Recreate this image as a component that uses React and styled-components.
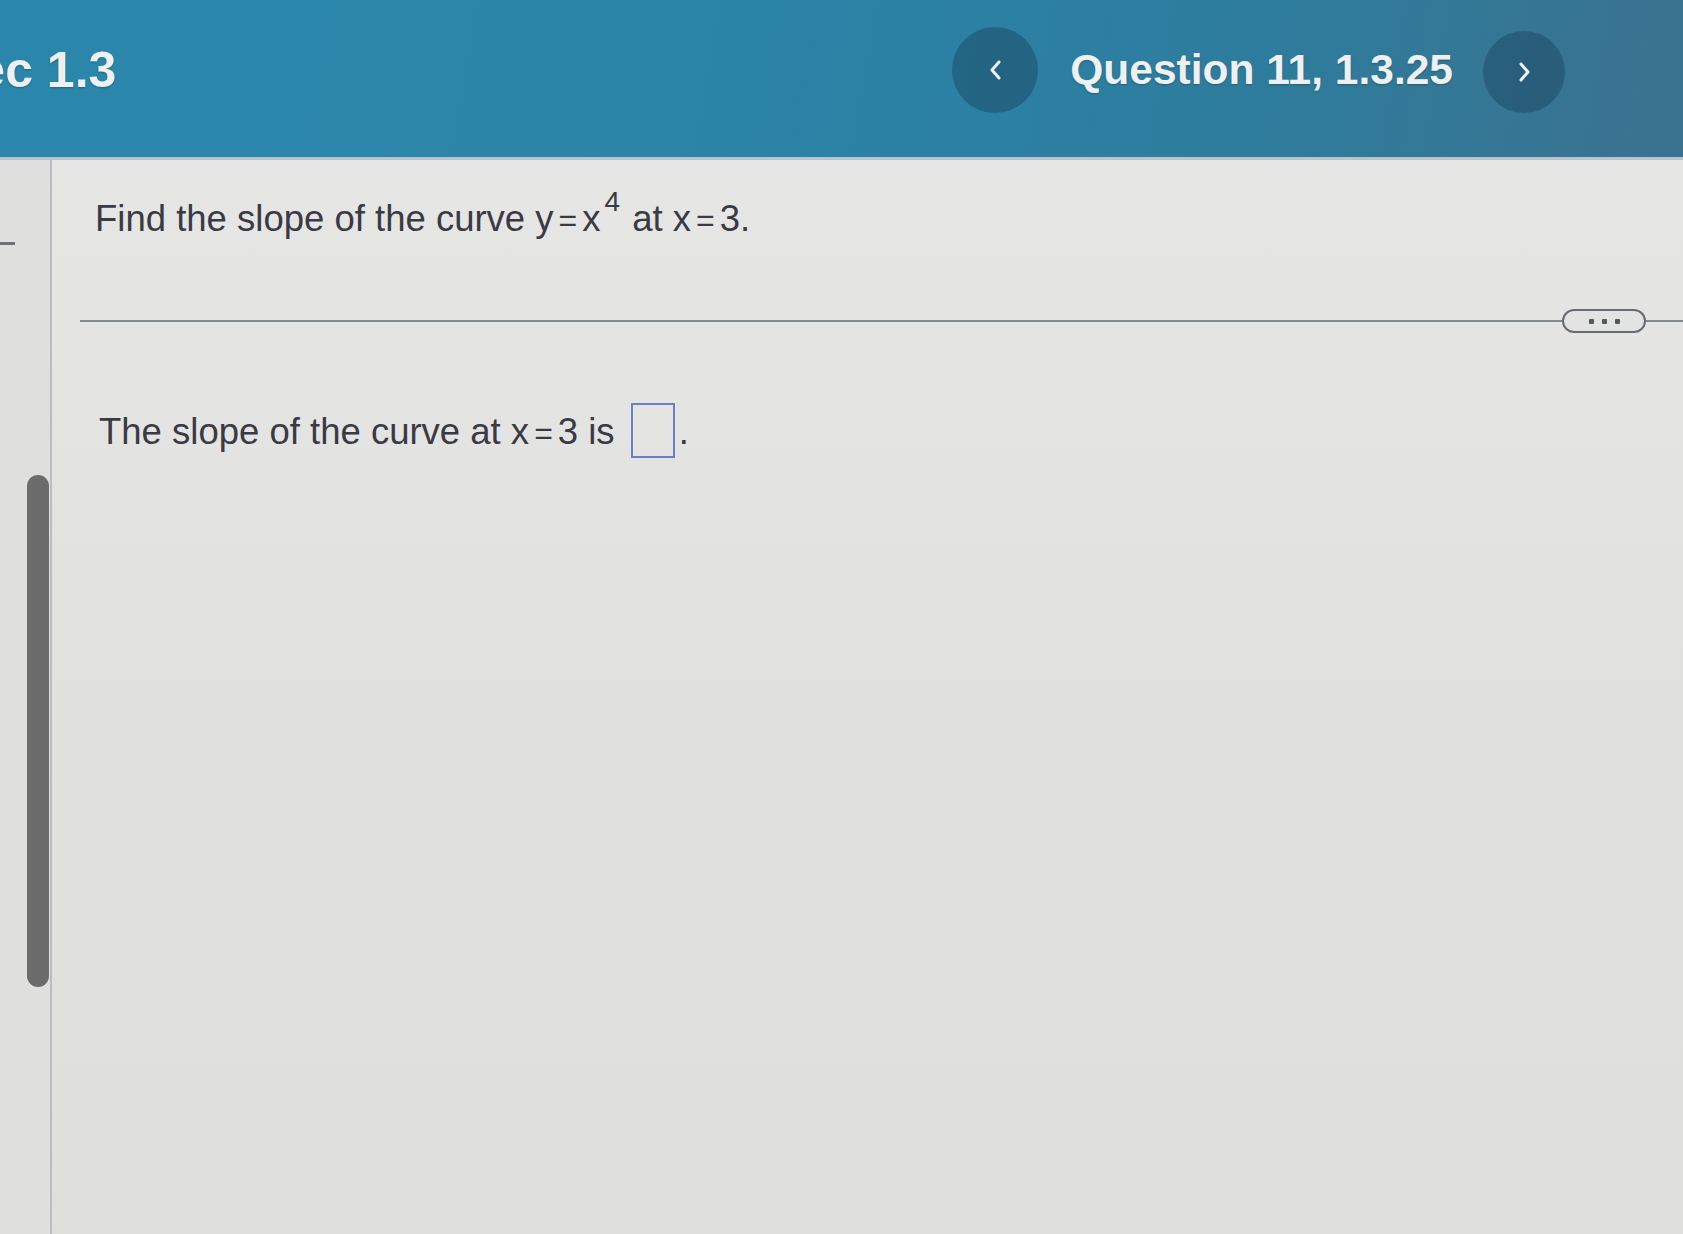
import React from "react";
import styled, { createGlobalStyle } from "styled-components";

const Global = createGlobalStyle`
  html, body { margin: 0; padding: 0; }
  body {
    background: #e1e1df;
    font-family: "Liberation Sans", Arial, sans-serif;
    overflow: hidden;
  }
`;

const Page = styled.div`
  width: 1683px;
  height: 1234px;
  display: flex;
  flex-direction: column;
  overflow: hidden;
`;

const Header = styled.header`
  height: 160px;
  flex: none;
  display: flex;
  align-items: flex-start;
  padding: 27px 118px 0 0;
  box-sizing: border-box;
  overflow: hidden;
  background: linear-gradient(100deg, #2a87ab 0%, #2a84a8 45%, #2e7c9d 75%, #3a728e 100%);
  border-bottom: 3px solid #b7c4cd;
`;

const SectionTitle = styled.div`
  font-size: 50px;
  font-weight: 700;
  color: #eef0f1;
  line-height: 86px;
  margin-left: -56px;
  white-space: nowrap;
  text-shadow: 0 1px 2px rgba(0, 0, 0, 0.25);
`;

const Nav = styled.nav`
  margin-left: auto;
  display: flex;
  align-items: center;
`;

const NavButton = styled.button`
  width: ${(p) => p.$size}px;
  height: ${(p) => p.$size}px;
  border-radius: 50%;
  border: none;
  padding: 0;
  margin-top: ${(p) => p.$shift || 0}px;
  background: rgba(25, 62, 88, 0.42);
  display: flex;
  align-items: center;
  justify-content: center;
  cursor: pointer;
`;

const QuestionTitle = styled.h1`
  margin: 0 30px 0 32px;
  font-size: 42.5px;
  font-weight: 700;
  color: #eef0f1;
  line-height: 86px;
  white-space: nowrap;
  text-shadow: 0 1px 2px rgba(0, 0, 0, 0.25);
`;

const Body = styled.div`
  flex: 1;
  display: flex;
  background: linear-gradient(180deg, #e6e6e4 0%, #e2e2e0 40%, #dfdfdd 100%);
`;

const Sidebar = styled.aside`
  width: 52px;
  flex: none;
  box-sizing: border-box;
  border-right: 2px solid #b9bcc3;
  background: #dfdfdd;
  display: flex;
  flex-direction: column;
  padding-top: 82px;
`;

const Dash = styled.div`
  width: 15px;
  height: 3px;
  background: #6f7177;
`;

const Thumb = styled.div`
  margin: 230px 0 0 27px;
  width: 22px;
  height: 512px;
  border-radius: 11px;
  background: #6c6c6c;
`;

const Main = styled.main`
  flex: 1;
  display: flex;
  flex-direction: column;
  color: #3a3a45;
  font-size: 36.5px;
`;

const Prompt = styled.p`
  margin: 37px 0 0 43px;
  line-height: 44px;
`;

const Op = styled.span`
  font-size: 32px;
  margin: 0 5px;
`;

const Sup = styled.sup`
  font-size: 28px;
  line-height: 0;
  vertical-align: 20px;
  margin-left: 4px;
  margin-right: 2px;
`;

const Divider = styled.div`
  margin: 67px 0 0 28px;
  display: flex;
  align-items: center;
`;

const Rule = styled.div`
  height: 2px;
  background: #838895;
  flex: ${(p) => (p.$width ? "none" : 1)};
  width: ${(p) => (p.$width ? `${p.$width}px` : "auto")};
`;

const Pill = styled.button`
  width: 84px;
  height: 24px;
  box-sizing: border-box;
  border: 2.5px solid #676b75;
  border-radius: 12px;
  background: #e3e3e1;
  display: flex;
  align-items: center;
  justify-content: center;
  gap: 8px;
  padding: 0;
`;

const Dot = styled.span`
  width: 5px;
  height: 5px;
  border-radius: 1px;
  background: #55575e;
`;

const Answer = styled.p`
  margin: 70px 0 0 47px;
  line-height: 44px;
`;

const AnswerBox = styled.span`
  display: inline-block;
  width: 44px;
  height: 55px;
  box-sizing: border-box;
  border: 2px solid #6a7fc6;
  vertical-align: -14px;
  margin: 0 4px 0 6px;
`;

function Chevron({ dir }) {
  const pts = dir === "left" ? "10,2 3,10 10,18" : "3,2 10,10 3,18";
  return (
    <svg width="13" height="20" viewBox="0 0 13 20">
      <polyline
        points={pts}
        fill="none"
        stroke="#eef0f1"
        strokeWidth="3"
        strokeLinecap="round"
        strokeLinejoin="round"
      />
    </svg>
  );
}

export default function App() {
  return (
    <>
      <Global />
      <Page>
        <Header>
          <SectionTitle>Sec 1.3</SectionTitle>
          <Nav>
            <NavButton $size={86} aria-label="Previous question">
              <Chevron dir="left" />
            </NavButton>
            <QuestionTitle>Question 11, 1.3.25</QuestionTitle>
            <NavButton $size={82} $shift={4} aria-label="Next question">
              <Chevron dir="right" />
            </NavButton>
          </Nav>
        </Header>
        <Body>
          <Sidebar>
            <Dash />
            <Thumb />
          </Sidebar>
          <Main>
            <Prompt>
              Find the slope of the curve y<Op>=</Op>x<Sup>4</Sup> at x<Op>=</Op>3.
            </Prompt>
            <Divider>
              <Rule />
              <Pill aria-label="More">
                <Dot />
                <Dot />
                <Dot />
              </Pill>
              <Rule $width={37} />
            </Divider>
            <Answer>
              The slope of the curve at x<Op>=</Op>3 is <AnswerBox />.
            </Answer>
          </Main>
        </Body>
      </Page>
    </>
  );
}
